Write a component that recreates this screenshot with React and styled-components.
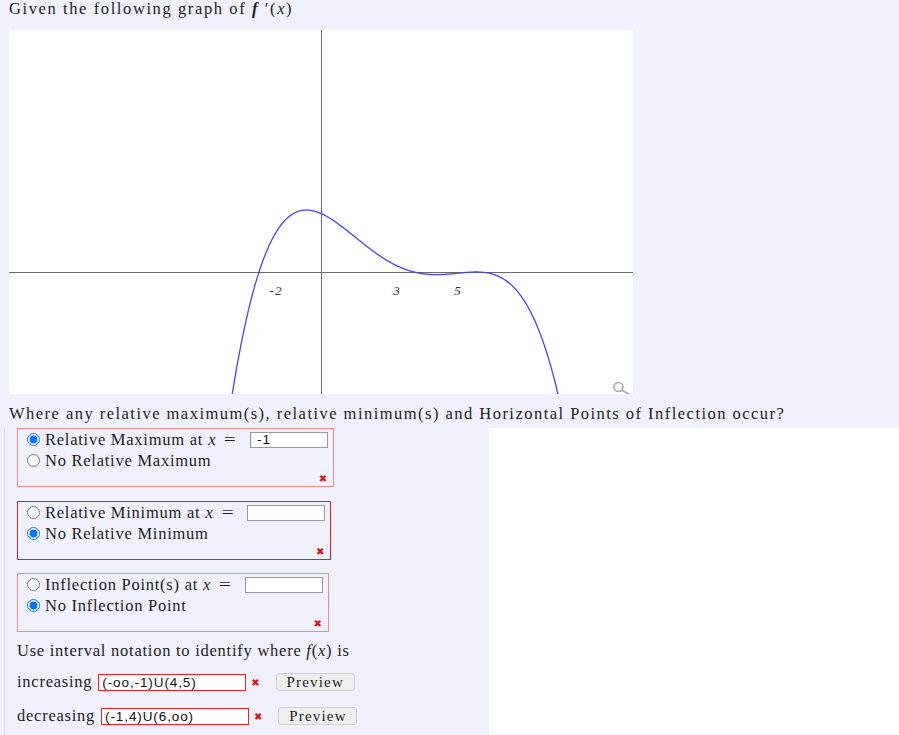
import React from "react";
import styled, { createGlobalStyle } from "styled-components";

const Global = createGlobalStyle`
  html, body { margin: 0; padding: 0; background: #ffffff; }
  body {
    font-family: "Liberation Serif", "Times New Roman", serif;
    font-size: 16.5px;
    letter-spacing: 1.47px;
    color: #1c1c1c;
  }
`;

const LAV = "#f1f1fd";

const Top = styled.div`
  background: ${LAV};
  padding: 0 0 0 9px;
`;

const Title = styled.div`
  line-height: 17px;
  height: 30px;
  letter-spacing: 1.6px;
`;

const GraphBox = styled.div`
  width: 624px;
  height: 364px;
  background: #ffffff;
  position: relative;
`;

const Question = styled.div`
  line-height: 18px;
  padding: 11px 0 5px 0;
  white-space: nowrap;
`;

const Panel = styled.div`
  width: 489px;
  background: ${LAV};
  padding-left: 4px;
  box-sizing: border-box;
`;

const PanelInner = styled.div`
  border-left: 1px solid #dcdce4;
  padding: 0 0 10px 12px;
  letter-spacing: 0.75px;
`;

const Group = styled.div`
  display: inline-block;
  border: 1px solid ${(p) => p.$color};
  padding: 0 5px 1px 8px;
  margin-bottom: ${(p) => p.$mb}px;
  vertical-align: top;
`;

const Row = styled.label`
  display: flex;
  align-items: center;
  height: 21px;
  white-space: nowrap;
`;

const Radio = styled.input`
  margin: 0 5px 0 1px;
  width: 13px;
  height: 13px;
`;

const MathX = styled.i`
  font-family: "Liberation Serif", serif;
  margin-left: 5px;
  letter-spacing: 0;
`;

const Eq = styled.span`
  display: inline-block;
  margin: 0 15px 0 10px;
  font-size: 17px;
  letter-spacing: 0;
  transform: scaleX(1.25);
`;

const SmallInput = styled.input`
  width: 78px;
  height: 16px;
  box-sizing: border-box;
  border: 1px solid #999;
  border-radius: 0;
  padding: 0 6px;
  font-family: "Liberation Sans", Arial, sans-serif;
  font-size: 13.5px;
  letter-spacing: 0.9px;
  color: #111;
  background: #fff;
  outline: none;
`;

const MarkLine = styled.div`
  text-align: right;
  height: 14px;
  line-height: 12px;
  padding-right: 1px;
`;

const Mark = styled.span`
  color: #dd1111;
  font-size: 10px;
  letter-spacing: 0;
  font-family: "DejaVu Sans", sans-serif;
`;

const Para = styled.div`
  line-height: 18px;
  margin: 10px 0 13px 0;
`;

const AnsRow = styled.div`
  display: flex;
  align-items: center;
  height: 18px;
  margin-bottom: ${(p) => p.$mb}px;
  white-space: nowrap;
`;

const AnsInput = styled.input`
  width: 148px;
  height: 17px;
  box-sizing: border-box;
  border: 1px solid #ee2020;
  border-radius: 0;
  margin-left: 6px;
  padding: 0 3px;
  font-family: "Liberation Sans", Arial, sans-serif;
  font-size: 13.5px;
  letter-spacing: 0.9px;
  color: #111;
  background: #fff;
  outline: none;
`;

const AnsMark = styled(Mark)`
  margin: 0 16px 0 5px;
`;

const Button = styled.button`
  width: 79px;
  height: 18px;
  padding: 0;
  border: 1px solid #d0d0d0;
  border-radius: 3px;
  background: #efefef;
  font-family: "Liberation Serif", serif;
  font-size: 15px;
  color: #222;
  line-height: 16px;
  letter-spacing: 1.2px;
`;

function Graph() {
  const W = 624, H = 364, ox = 312, oy = 242, sx = 31, sy = 0.39;
  const pts = [];
  for (let px = 200; px <= 580; px += 1) {
    const x = (px - ox) / sx;
    const v = -(x + 2) * (x - 3) * (x - 5) * (x - 5);
    const py = oy - sy * v;
    pts.push(`${px},${py.toFixed(2)}`);
  }
  return (
    <svg width={W} height={H} viewBox={`0 0 ${W} ${H}`} style={{ display: "block" }}>
      <defs>
        <clipPath id="c">
          <rect x="0" y="0" width={W} height={H} />
        </clipPath>
      </defs>
      <line x1="0" y1={oy + 0.5} x2={W} y2={oy + 0.5} stroke="#6a6a6a" strokeWidth="1" />
      <line x1={ox + 0.5} y1="0" x2={ox + 0.5} y2={H} stroke="#6a6a6a" strokeWidth="1" />
      <polyline points={pts.join(" ")} fill="none" stroke="#4646f0" strokeWidth="1.3" clipPath="url(#c)" />
      <g fontFamily="Liberation Serif, serif" fontStyle="italic" fontSize="13" fill="#333" textAnchor="middle" letterSpacing="1">
        <text x="267" y="265">-2</text>
        <text x="388" y="265">3</text>
        <text x="449" y="265">5</text>
      </g>
      <g stroke="#a8a8a8" strokeWidth="1.6" fill="none">
        <circle cx="609.5" cy="357" r="4.5" />
        <line x1="613" y1="360.5" x2="620" y2="364" />
      </g>
    </svg>
  );
}

function ChoiceGroup({ color, mb, label, noLabel, value, checkedFirst }) {
  return (
    <Group $color={color} $mb={mb}>
      <Row>
        <Radio type="radio" readOnly checked={checkedFirst} />
        {label}
        <MathX>x</MathX>
        <Eq>=</Eq>
        <SmallInput readOnly value={value} />
      </Row>
      <Row>
        <Radio type="radio" readOnly checked={!checkedFirst} />
        {noLabel}
      </Row>
      <MarkLine>
        <Mark>✖</Mark>
      </MarkLine>
    </Group>
  );
}

export default function App() {
  return (
    <>
      <Global />
      <Top>
        <Title>
          Given the following graph of <i><b>f</b></i> ′(<i>x</i>)
        </Title>
        <GraphBox>
          <Graph />
        </GraphBox>
        <Question>
          Where any relative maximum(s), relative minimum(s) and Horizontal Points of Inflection occur?
        </Question>
      </Top>
      <Panel>
        <PanelInner>
          <ChoiceGroup color="#f08a8a" mb={14} label="Relative Maximum at" noLabel="No Relative Maximum" value="-1" checkedFirst />
          <br />
          <ChoiceGroup color="#ee1c1c" mb={13} label="Relative Minimum at" noLabel="No Relative Minimum" value="" checkedFirst={false} />
          <br />
          <ChoiceGroup color="#f08a8a" mb={0} label="Inflection Point(s) at" noLabel="No Inflection Point" value="" checkedFirst={false} />
          <Para>
            Use interval notation to identify where <i>f</i>(<i>x</i>) is
          </Para>
          <AnsRow $mb={16}>
            increasing
            <AnsInput readOnly value="(-oo,-1)U(4,5)" />
            <AnsMark>✖</AnsMark>
            <Button>Preview</Button>
          </AnsRow>
          <AnsRow $mb={0}>
            decreasing
            <AnsInput readOnly value="(-1,4)U(6,oo)" />
            <AnsMark>✖</AnsMark>
            <Button>Preview</Button>
          </AnsRow>
        </PanelInner>
      </Panel>
    </>
  );
}
